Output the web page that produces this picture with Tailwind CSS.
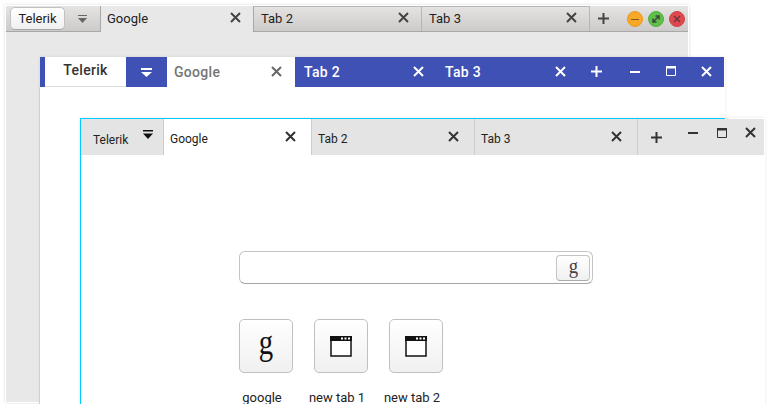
<!DOCTYPE html>
<html><head><meta charset="utf-8"><script src="https://cdn.jsdelivr.net/npm/@tailwindcss/browser@4"></script></head>
<body class="bg-white">
<div class="relative w-[770px] h-[404px] overflow-hidden bg-white font-['Roboto',sans-serif] text-[#222]">

<!-- Window 1 -->
<section class="absolute left-[5px] top-[5px] w-[684px] h-[398px] border border-white bg-[#e8e8e8] shadow-[0_0_3px_rgba(0,0,0,0.15)]">
  <div class="flex h-[26px] border-b border-[#aaa8a6] bg-gradient-to-b from-[#e6e4e2] to-[#cdcbc9] text-[13px]">
    <div class="ml-[4px] mt-[1px] flex h-[23px] w-[55px] shrink-0 items-center justify-center rounded-[5px] border border-[#c4c2c0] border-b-[#a5a5a5] bg-gradient-to-b from-white to-[#f0f0f0]">Telerik</div>
    <div class="flex w-[35px] shrink-0 items-center justify-center">
      <svg width="9" height="8" viewBox="0 0 9 8"><rect width="9" height="1" y="0" fill="#666"/><path d="M0 3h9L4.500 8z" fill="#666"/></svg>
    </div>
    <div class="flex h-[26px] w-[154px] shrink-0 items-center justify-between border-x border-[#aaa8a6] bg-[#e8e8e8] pl-[6px] pr-[12px]"><span>Google</span><svg class="mb-[3px]" width="11" height="11" viewBox="0 0 11 11"><path d="M1 1l9 9M10 1l-9 9" stroke="#444" stroke-width="2"/></svg></div>
    <div class="flex w-[168px] shrink-0 items-center justify-between border-r border-t border-[#b8b6b4] pl-[7px] pr-[12px]"><span>Tab 2</span><svg class="mb-[3px]" width="11" height="11" viewBox="0 0 11 11"><path d="M1 1l9 9M10 1l-9 9" stroke="#444" stroke-width="2"/></svg></div>
    <div class="flex w-[168px] shrink-0 items-center justify-between border-r border-t border-[#b8b6b4] pl-[7px] pr-[12px]"><span>Tab 3</span><svg class="mb-[3px]" width="11" height="11" viewBox="0 0 11 11"><path d="M1 1l9 9M10 1l-9 9" stroke="#444" stroke-width="2"/></svg></div>
    <div class="flex w-[27px] shrink-0 items-center justify-center pr-[1px]"><svg width="11" height="11" viewBox="0 0 11 11"><path d="M5.500 0v11M0 5.500h11" stroke="#444" stroke-width="2"/></svg></div>
    <div class="ml-[10px] flex items-center gap-[5px]">
      <span class="flex h-[16px] w-[16px] items-center justify-center rounded-full border border-[#e59a20] bg-[#f9a825]"><svg width="8" height="8" viewBox="0 0 8 8"><path d="M0 4.500h8" stroke="#7a5a20" stroke-width="1"/></svg></span>
      <span class="flex h-[16px] w-[16px] items-center justify-center rounded-full border border-[#54ae40] bg-[#5fc049]"><svg width="8" height="8" viewBox="0 0 8 8"><path d="M1 7l6-6M3.500 1H7v3.500M1 3.500V7h3.500" stroke="#3c4a3c" stroke-width="1.500" fill="none"/></svg></span>
      <span class="flex h-[16px] w-[16px] items-center justify-center rounded-full border border-[#cf4048] bg-[#e0474f]"><svg width="8" height="8" viewBox="0 0 8 8"><path d="M1 1l6 6M7 1l-6 6" stroke="#6a3a3c" stroke-width="1.500"/></svg></span>
    </div>
  </div>
</section>

<!-- Window 2 -->
<section class="absolute left-[40px] top-[57px] flex h-[360px] w-[685px] flex-col border-r border-white bg-white shadow-[0_0_3px_rgba(0,0,0,0.1)]">
  <div class="flex h-[30px] shrink-0 bg-[#3f51b5] pl-[5px] text-white">
    <div class="flex h-[30px] w-[81px] shrink-0 items-center justify-center border-b border-[#dcdcdc] bg-white pb-[2px] text-[14px] font-medium tracking-[0.3px] text-[#333]">Telerik</div>
    <div class="flex w-[41px] shrink-0 items-center justify-center">
      <svg width="11" height="9" viewBox="0 0 11 9"><rect width="11" height="2" fill="#fff"/><path d="M0 4h11L5.500 9z" fill="#fff"/></svg>
    </div>
    <div class="flex w-[128px] shrink-0 items-center justify-between bg-white pl-[7px] pr-[13px] text-[14px] font-medium tracking-[0.3px] text-[#757575]"><span class="mt-[1px]">Google</span><svg class="mb-[2px]" width="11" height="11" viewBox="0 0 11 11"><path d="M1 1l9 9M10 1l-9 9" stroke="#666" stroke-width="2"/></svg></div>
    <div class="flex w-[142px] shrink-0 items-center justify-between pl-[9px] pr-[13px] text-[14px] font-medium tracking-[0.3px]"><span class="mt-[1px]">Tab 2</span><svg class="mb-[2px]" width="11" height="11" viewBox="0 0 11 11"><path d="M1 1l9 9M10 1l-9 9" stroke="#fff" stroke-width="2"/></svg></div>
    <div class="flex w-[142px] shrink-0 items-center justify-between pl-[8px] pr-[13px] text-[14px] font-medium tracking-[0.3px]"><span class="mt-[1px]">Tab 3</span><svg class="mb-[2px]" width="11" height="11" viewBox="0 0 11 11"><path d="M1 1l9 9M10 1l-9 9" stroke="#fff" stroke-width="2"/></svg></div>
    <div class="flex w-[34px] shrink-0 items-center justify-center pb-[2px]"><svg width="11" height="11" viewBox="0 0 11 11"><path d="M5.500 0v11M0 5.500h11" stroke="#fff" stroke-width="2"/></svg></div>
    <div class="ml-[5px] flex w-[34px] shrink-0 items-center justify-center"><svg width="10" height="2" viewBox="0 0 10 2"><rect width="10" height="2" fill="#fff"/></svg></div>
    <div class="ml-[2px] flex w-[34px] shrink-0 items-center justify-center pb-[2px]"><svg width="10" height="10" viewBox="0 0 10 10"><path d="M.500.500h9v9h-9z" stroke="#fff" fill="none"/><rect width="10" height="2.500" fill="#fff"/></svg></div>
    <div class="flex w-[36px] shrink-0 items-center justify-center pb-[2px]"><svg width="11" height="11" viewBox="0 0 11 11"><path d="M1 1l9 9M10 1l-9 9" stroke="#fff" stroke-width="2"/></svg></div>
  </div>
  <div class="-ml-px flex-1 border-l border-[#d0d0d0]"></div>
</section>

<!-- Window 3 -->
<section class="absolute left-[80px] top-[118px] w-[685px] h-[320px] border border-white border-l-[#0cf] bg-white shadow-[0_0_3px_rgba(0,0,0,0.1)]">
  <div class="absolute -left-px -top-px h-px w-[645px] bg-[#0cf]"></div>
  <div class="flex h-[36px] bg-[#e4e4e4] text-[12px] text-[#222]">
    <div class="flex w-[83px] shrink-0 justify-between border-r border-[#cccccc] pl-[12px] pr-[10px]"><span class="mt-[12px]">Telerik</span><svg class="mt-[11px]" width="10" height="9" viewBox="0 0 10 9"><rect width="10" height="1.500" fill="#111"/><path d="M0 3.500h10L5 9z" fill="#111"/></svg></div>
    <div class="flex w-[148px] shrink-0 justify-between border-r border-[#cccccc] bg-white pl-[6px] pr-[15px]"><span class="mt-[11px]">Google</span><svg class="mt-[12px]" width="11" height="11" viewBox="0 0 11 11"><path d="M1 1l9 9M10 1l-9 9" stroke="#333" stroke-width="2"/></svg></div>
    <div class="flex w-[163px] shrink-0 justify-between border-r border-[#cccccc] pl-[6px] pr-[15px]"><span class="mt-[11px]">Tab 2</span><svg class="mt-[12px]" width="11" height="11" viewBox="0 0 11 11"><path d="M1 1l9 9M10 1l-9 9" stroke="#333" stroke-width="2"/></svg></div>
    <div class="flex w-[163px] shrink-0 justify-between border-r border-[#cccccc] pl-[6px] pr-[15px]"><span class="mt-[11px]">Tab 3</span><svg class="mt-[12px]" width="11" height="11" viewBox="0 0 11 11"><path d="M1 1l9 9M10 1l-9 9" stroke="#333" stroke-width="2"/></svg></div>
    <div class="w-[37px] shrink-0 pl-[13px] pt-[13px]"><svg width="11" height="11" viewBox="0 0 11 11"><path d="M5.500 0v11M0 5.500h11" stroke="#333" stroke-width="2"/></svg></div>
    <div class="flex shrink-0 pt-[8px]">
      <div class="flex h-[11px] w-[30px] items-center justify-center pl-[6px]"><svg width="10" height="2" viewBox="0 0 10 2"><rect width="10" height="2" fill="#333"/></svg></div>
      <div class="flex h-[11px] w-[28px] items-center justify-center pl-[5px]"><svg width="10" height="10" viewBox="0 0 10 10"><path d="M.500.500h9v9h-9z" stroke="#333" fill="none"/><rect width="10" height="2.500" fill="#333"/></svg></div>
      <div class="flex h-[11px] w-[26px] items-center justify-center pl-[8px]"><svg width="11" height="11" viewBox="0 0 11 11"><path d="M1 1l9 9M10 1l-9 9" stroke="#333" stroke-width="2"/></svg></div>
    </div>
  </div>

  <div class="ml-[158px] mt-[96px] w-[354px]">
    <div class="flex h-[33px] items-center justify-end rounded-[6px] border border-[#c4c4c4] border-b-[#a5a5a5] bg-white pr-[2px]">
      <div class="flex h-[26px] w-[34px] items-center justify-center rounded-[4px] border border-[#c4c4c4] border-b-[#aaa] bg-gradient-to-b from-white to-[#f0f0f0] pb-[4px]"><span class="scale-x-[0.85] font-['Liberation_Serif',serif] text-[22px] leading-none text-[#444]">g</span></div>
    </div>
    <div class="mt-[35px] flex gap-[21px]">
      <div class="flex w-[54px] flex-col items-center">
        <div class="flex h-[54px] w-[54px] items-center justify-center rounded-[5px] border border-[#c0c0c0] bg-gradient-to-b from-white to-[#f0f0f0] pb-[8px]"><span class="scale-x-[0.8] font-['Liberation_Serif',serif] text-[36px] leading-none text-[#111]">g</span></div>
        <div class="mr-[8px] mt-[18px] whitespace-nowrap text-[13px] leading-[14px]">google</div>
      </div>
      <div class="flex w-[54px] flex-col items-center">
        <div class="flex h-[54px] w-[54px] items-center justify-center rounded-[5px] border border-[#c0c0c0] bg-gradient-to-b from-white to-[#f0f0f0]"><svg width="22" height="21" viewBox="0 0 22 21"><rect x="1" y="1" width="20" height="19" fill="#fff" stroke="#111" stroke-width="1.500"/><rect x="0" y="0" width="22" height="5" fill="#111"/><rect x="11" y="1.500" width="2" height="2" fill="#fff"/><rect x="14.500" y="1.500" width="2" height="2" fill="#fff"/><rect x="18" y="1.500" width="2" height="2" fill="#fff"/></svg></div>
        <div class="mr-[8px] mt-[18px] whitespace-nowrap text-[13px] leading-[14px]">new tab 1</div>
      </div>
      <div class="flex w-[54px] flex-col items-center">
        <div class="flex h-[54px] w-[54px] items-center justify-center rounded-[5px] border border-[#c0c0c0] bg-gradient-to-b from-white to-[#f0f0f0]"><svg width="22" height="21" viewBox="0 0 22 21"><rect x="1" y="1" width="20" height="19" fill="#fff" stroke="#111" stroke-width="1.500"/><rect x="0" y="0" width="22" height="5" fill="#111"/><rect x="11" y="1.500" width="2" height="2" fill="#fff"/><rect x="14.500" y="1.500" width="2" height="2" fill="#fff"/><rect x="18" y="1.500" width="2" height="2" fill="#fff"/></svg></div>
        <div class="mr-[8px] mt-[18px] whitespace-nowrap text-[13px] leading-[14px]">new tab 2</div>
      </div>
    </div>
  </div>
</section>
</div>
</body></html>
